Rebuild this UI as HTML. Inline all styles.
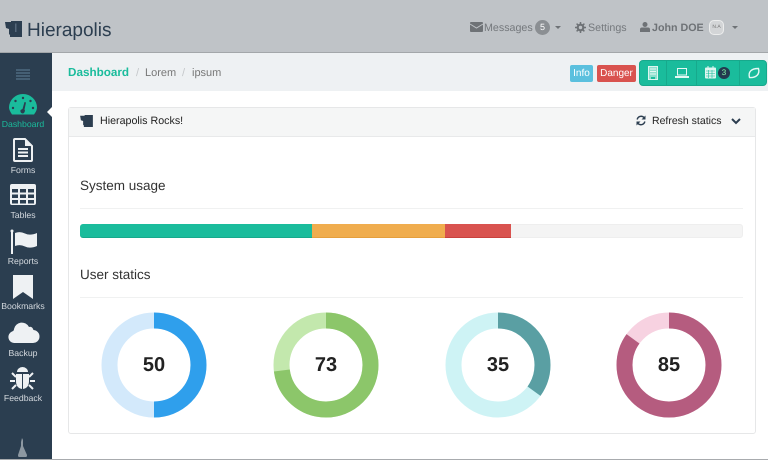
<!DOCTYPE html>
<html><head><meta charset="utf-8"><style>
*{box-sizing:border-box}
html,body{margin:0;padding:0;width:768px;height:460px;overflow:hidden;background:#fff;font-family:"Liberation Sans",sans-serif;text-rendering:geometricPrecision}
#w{position:absolute;left:0;top:0;width:768px;height:460px;overflow:hidden;filter:blur(.3px)}
.a{position:absolute;white-space:nowrap}
svg{position:absolute;overflow:visible}
.nav{position:absolute;left:0;width:46px;text-align:center;font-size:8.700px;line-height:11px;color:#d5dadf}
</style></head><body><div id="w">
<div class="a" style="left:0;top:0;width:768px;height:53px;background:#bfc3c7;border-bottom:1px solid #a3a7aa"></div>
<svg style="left:5px;top:21px" width="17" height="16" viewBox="0 0 17 16"><path d="M0 1h6V0h11v16H5v-2l-1-1V8L1 7z" fill="#2c3e50"/><path d="M10 2.500h1.500V11H10z" fill="#55677a"/></svg>
<div class="a" style="left:27px;top:19px;font-size:19px;line-height:23px;color:#2c3e50">Hierapolis</div>

<svg style="left:470px;top:22px" width="13" height="10" viewBox="0 0 13 10"><rect width="13" height="10" rx="1" fill="#6e7276"/><path d="M0 2l6.500 4L13 2" fill="none" stroke="#bfc3c7"/></svg>
<div class="a" style="left:484px;top:21px;font-size:10.700px;line-height:14px;color:#75797d">Messages</div>
<div class="a" style="left:535px;top:20px;width:15px;height:15px;border-radius:8px;background:#8b8f93;color:#fff;font-size:9px;line-height:15px;text-align:center">5</div>
<div class="a" style="left:555px;top:26px;border:3px solid transparent;border-top:3px solid #6e7276"></div>
<svg style="left:575px;top:22px" width="11" height="11" viewBox="0 0 11 11"><circle cx="5.500" cy="5.500" r="2.800" fill="none" stroke="#6e7276" stroke-width="2.200"/><path d="M5.500 0v11M0 5.500h11M1.600 1.600l7.800 7.800M9.400 1.600L1.600 9.400" stroke="#6e7276" stroke-width="1.500" stroke-dasharray="2 7"/></svg>
<div class="a" style="left:588px;top:21px;font-size:10.700px;line-height:14px;color:#75797d">Settings</div>
<svg style="left:640px;top:22px" width="10" height="10" viewBox="0 0 10 10"><circle cx="5" cy="2.500" r="2.500" fill="#6e7276"/><path d="M0 10V7.500q0-2 2-2h6q2 0 2 2V10z" fill="#6e7276"/></svg>
<div class="a" style="left:652px;top:21px;font-size:10.700px;line-height:14px;font-weight:bold;color:#6e7276">John DOE</div>
<div class="a" style="left:709px;top:20px;width:15px;height:15px;border-radius:5px;background:#d3d5d7;border:1px solid #eceded;color:#777;font-size:5px;line-height:13px;text-align:center">N.A</div>
<div class="a" style="left:732px;top:26px;border:3px solid transparent;border-top:3px solid #6e7276"></div>

<div class="a" style="left:52px;top:53px;width:716px;height:38px;background:#eef1f3"></div>
<div class="a" style="left:68px;top:66px;font-size:11.700px;line-height:14px;font-weight:bold;color:#1abc9c">Dashboard</div>
<div class="a" style="left:136px;top:66px;font-size:11px;line-height:14px;color:#c4c7ca">/</div>
<div class="a" style="left:145px;top:66px;font-size:11px;line-height:14px;color:#777">Lorem</div>
<div class="a" style="left:182px;top:66px;font-size:11px;line-height:14px;color:#c4c7ca">/</div>
<div class="a" style="left:192px;top:66px;font-size:11px;line-height:14px;color:#777">ipsum</div>
<div class="a" style="left:570px;top:65px;width:23px;height:17px;border-radius:2px;background:#5bc0de;color:#fff;font-size:10px;line-height:17px;text-align:center">Info</div>
<div class="a" style="left:597px;top:65px;width:39px;height:17px;border-radius:2px;background:#d9534f;color:#fff;font-size:10px;line-height:17px;text-align:center">Danger</div>
<div class="a" style="left:639px;top:60px;width:128px;height:26px;border-radius:4px;background:#1abc9c;border:1px solid #17a98c"></div>
<div class="a" style="left:666px;top:61px;width:1px;height:24px;background:#17a98c"></div>
<div class="a" style="left:696px;top:61px;width:1px;height:24px;background:#17a98c"></div>
<div class="a" style="left:739px;top:61px;width:1px;height:24px;background:#17a98c"></div>
<svg style="left:648px;top:66px" width="10" height="14" viewBox="0 0 10 14"><path d="M.5.500h9v13h-9z" fill="#8fe0ce" stroke="#dff5f0"/><path d="M2 3h6M2 5.500h6M2 8h6" stroke="#e6f8f4"/><path d="M3 13v-2h4v2" fill="#1abc9c"/></svg>
<svg style="left:675px;top:68px" width="14" height="10" viewBox="0 0 14 10"><rect x="2.500" y=".5" width="9" height="6.500" fill="none" stroke="#e6f8f4"/><rect y="8" width="14" height="2" fill="#e6f8f4"/></svg>
<svg style="left:705px;top:66px" width="11" height="13" viewBox="0 0 11 13"><rect y="1.500" width="11" height="11" rx="1" fill="#dff5f0"/><path d="M3 0v3M8 0v3" stroke="#dff5f0"/><path d="M1 5h9M1 7.500h9M1 10h9M3.500 4v8M7 4v8" stroke="#1abc9c" stroke-width=".6"/></svg>
<div class="a" style="left:718px;top:67px;width:12px;height:12px;border-radius:6px;background:#233a4f;color:#8fa;font-size:8px;line-height:12px;text-align:center">3</div>
<svg style="left:748px;top:67px" width="12" height="12" viewBox="0 0 12 12"><path d="M1.500 10.500C0 5 3 1.500 10.500 1.500c1.500 5.500-2 9.500-9 9z" fill="none" stroke="#e6f8f4" stroke-width="1.400"/></svg>

<div class="a" style="left:0;top:53px;width:52px;height:407px;background:#2b3e50"></div>
<div class="a" style="left:47px;top:106px;border:6px solid transparent;border-right:6px solid #fff;border-left:0"></div>
<svg style="left:16px;top:69px" width="14" height="11"><path d="M0 1h14M0 4h14M0 7h14M0 10h14" stroke="#4e6a80" stroke-width="1.500"/></svg>
<svg style="left:9px;top:94px" width="28" height="21" viewBox="0 0 28 21"><path d="M3 20.500Q0 16 0 13.500a14 13.500 0 0 1 28 0q0 3-3 7z" fill="#1abc9c"/><g fill="#2b3e50"><circle cx="14" cy="4" r="1.200"/><circle cx="6.500" cy="7" r="1.200"/><circle cx="21.500" cy="7" r="1.200"/><circle cx="4" cy="14" r="1.200"/><circle cx="24" cy="14" r="1.200"/><path d="M15.500 8l1.500.5-1.500 7 .5 1q-.5 3-2.500 3-2.500-.5-2-3.500l2-1z"/></g></svg>
<div class="nav" style="top:119px;color:#1abc9c">Dashboard</div>
<svg style="left:13px;top:138px" width="20" height="24" viewBox="0 0 20 24"><path d="M2 1h10l7 7v14a1 1 0 0 1-1 1H2a1 1 0 0 1-1-1V2a1 1 0 0 1 1-1z" fill="#2b3e50" stroke="#eef1f3" stroke-width="2"/><path d="M12 1v7h7z" fill="#eef1f3"/><path d="M5 11h10M5 14.500h10M5 18h10" stroke="#eef1f3" stroke-width="2"/></svg>
<div class="nav" style="top:165px">Forms</div>
<svg style="left:10px;top:184px" width="26" height="21" viewBox="0 0 26 21"><rect width="26" height="21" rx="2" fill="#eef1f3"/><g fill="#2b3e50"><rect x="2" y="5" width="6" height="3.500"/><rect x="10" y="5" width="6" height="3.500"/><rect x="18" y="5" width="6" height="3.500"/><rect x="2" y="10.500" width="6" height="3.500"/><rect x="10" y="10.500" width="6" height="3.500"/><rect x="18" y="10.500" width="6" height="3.500"/><rect x="2" y="16" width="6" height="3.500"/><rect x="10" y="16" width="6" height="3.500"/><rect x="18" y="16" width="6" height="3.500"/></g></svg>
<div class="nav" style="top:210px">Tables</div>
<svg style="left:10px;top:229px" width="27" height="25" viewBox="0 0 27 25"><path d="M2 1v24" stroke="#eef1f3" stroke-width="2"/><circle cx="2" cy="2" r="1.500" fill="#eef1f3"/><path d="M5 4q5-2 10 .5t12-.5v13q-7 3-12 .5T5 17z" fill="#eef1f3"/></svg>
<div class="nav" style="top:256px">Reports</div>
<svg style="left:13px;top:275px" width="20" height="24" viewBox="0 0 20 24"><path d="M0 0h20v24l-10-7-10 7z" fill="#eef1f3"/></svg>
<div class="nav" style="top:301px">Bookmarks</div>
<svg style="left:8px;top:321px" width="30" height="22" viewBox="0 0 30 22"><path d="M6 22a6 6 0 0 1-2-11.500Q6 10 6 8a8 8 0 0 1 15-2q3-1 4.500 3a6.500 6.500 0 0 1-1 13z" fill="#eef1f3"/></svg>
<div class="nav" style="top:348px">Backup</div>
<svg style="left:10px;top:366px" width="25" height="25" viewBox="0 0 25 25"><path d="M7 6a5.500 5 0 0 1 11 0z" fill="#eef1f3"/><path d="M6 8h6v15q-6-1-6-8zM13 8h6v7q0 7-6 8z" fill="#eef1f3"/><path d="M6 11L2 7M19 11l4-4M5 15H0M20 15h5M6 19l-4 4M19 19l4 4" stroke="#eef1f3" stroke-width="2"/></svg>
<div class="nav" style="top:393px">Feedback</div>
<svg style="left:17px;top:438px" width="11" height="19" viewBox="0 0 11 19"><path d="M5 0l1 2v6l4 9q0 2-1 2H2q-1 0-1-2l3-9V4z" fill="#8d98a1"/></svg>

<div class="a" style="left:68px;top:107px;width:688px;height:327px;background:#fff;border:1px solid #e6e7e8;border-radius:3px"></div>
<div class="a" style="left:69px;top:108px;width:686px;height:29px;background:#f5f6f6;border-bottom:1px solid #e8e9ea"></div>
<svg style="left:80px;top:115px" width="13" height="12" viewBox="0 0 17 16"><path d="M0 1h6V0h11v16H5v-2l-1-1V8L1 7z" fill="#2c3e50"/></svg>
<div class="a" style="left:100px;top:115px;font-size:10.700px;line-height:13px;color:#222">Hierapolis Rocks!</div>
<svg style="left:636px;top:115px" width="10" height="11" viewBox="0 0 10 11"><path d="M1.200 4.500A4 4 0 0 1 8 2.500M8.800 6.500A4 4 0 0 1 2 8.500" fill="none" stroke="#2c3e50" stroke-width="1.500"/><path d="M9.500.5v4h-4zM.5 10.500v-4h4z" fill="#2c3e50"/></svg>
<div class="a" style="left:652px;top:115px;font-size:10.500px;line-height:13px;color:#222">Refresh statics</div>
<svg style="left:731px;top:118px" width="10" height="7" viewBox="0 0 10 7"><path d="M1 1l4 4 4-4" fill="none" stroke="#2c3e50" stroke-width="2"/></svg>

<div class="a" style="left:80px;top:178px;font-size:13.500px;line-height:16px;color:#333">System usage</div>
<div class="a" style="left:80px;top:208px;width:663px;height:1px;background:#f0f1f1"></div>
<div class="a" style="left:80px;top:224px;width:663px;height:14px;border-radius:3px;background:#f4f4f4;border:1px solid #eeeeee"></div>
<div class="a" style="left:80px;top:224px;width:232px;height:14px;border-radius:3px 0 0 3px;background:#1abc9c;border-bottom:1px solid #17a98c"></div>
<div class="a" style="left:312px;top:224px;width:133px;height:14px;background:#f0ad4e;border-bottom:1px solid #e59f3d"></div>
<div class="a" style="left:445px;top:224px;width:66px;height:14px;background:#d9534f;border-bottom:1px solid #c9413d"></div>
<div class="a" style="left:80px;top:267px;font-size:13.500px;line-height:16px;color:#333">User statics</div>
<div class="a" style="left:80px;top:297px;width:663px;height:1px;background:#f0f1f1"></div>

<svg style="left:0;top:0" width="768" height="460">
<g fill="none" stroke-width="16">
<circle cx="154" cy="365" r="44.500" stroke="#d3e9fb"/>
<circle cx="154" cy="365" r="44.500" stroke="#2f9fec" pathLength="100" stroke-dasharray="50 50" transform="rotate(-90 154 365)"/>
<circle cx="326" cy="365" r="44.500" stroke="#c3e8ad"/>
<circle cx="326" cy="365" r="44.500" stroke="#8cc66a" pathLength="100" stroke-dasharray="73 27" transform="rotate(-90 326 365)"/>
<circle cx="498" cy="365" r="44.500" stroke="#cef3f5"/>
<circle cx="498" cy="365" r="44.500" stroke="#5a9fa3" pathLength="100" stroke-dasharray="35 65" transform="rotate(-90 498 365)"/>
<circle cx="669" cy="365" r="44.500" stroke="#f7d2e1"/>
<circle cx="669" cy="365" r="44.500" stroke="#b55c7f" pathLength="100" stroke-dasharray="85 15" transform="rotate(-90 669 365)"/>
</g>
<g font-family="Liberation Sans, sans-serif" font-size="20" font-weight="bold" fill="#222" text-anchor="middle">
<text x="154" y="371">50</text><text x="326" y="371">73</text><text x="498" y="371">35</text><text x="669" y="371">85</text>
</g></svg>
<div class="a" style="left:0;top:459px;width:768px;height:1px;background:#a8abae"></div>
</div></body></html>
